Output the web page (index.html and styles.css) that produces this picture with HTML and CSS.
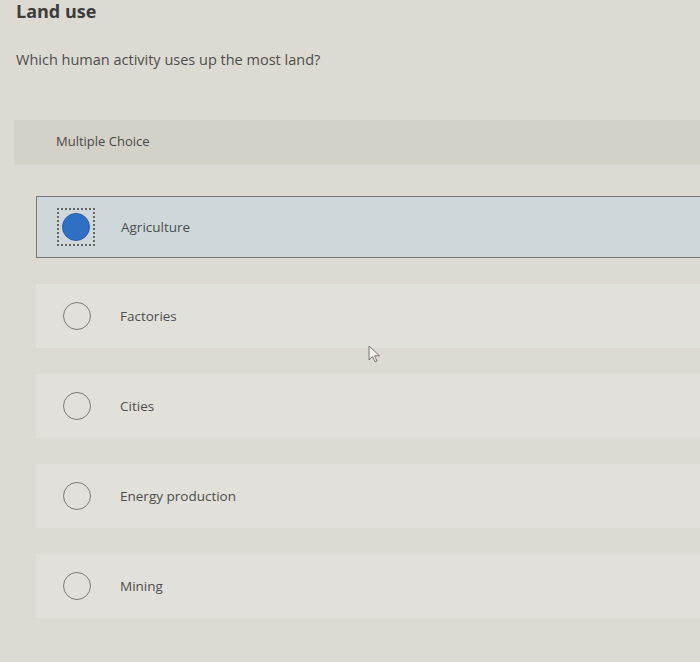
FILE: index.html
```html
<!DOCTYPE html>
<html lang="en">
<head>
<meta charset="UTF-8" />
<meta name="viewport" content="width=device-width, initial-scale=1" />
<title>Land use</title>
<link rel="stylesheet" href="styles.css">
</head>
<body>

<header class="top">
  <h1>Land use</h1>
</header>

<p class="question">Which human activity uses up the most land?</p>

<section class="panel">
  <div class="panel-head">Multiple Choice</div>

  <div class="choices">
    <label class="choice selected">
      <span class="focus"><span class="radio"></span></span>
      <span class="text">Agriculture</span>
    </label>
    <label class="choice">
      <span class="focus"><span class="radio"></span></span>
      <span class="text">Factories</span>
    </label>
    <label class="choice">
      <span class="focus"><span class="radio"></span></span>
      <span class="text">Cities</span>
    </label>
    <label class="choice">
      <span class="focus"><span class="radio"></span></span>
      <span class="text">Energy production</span>
    </label>
    <label class="choice">
      <span class="focus"><span class="radio"></span></span>
      <span class="text">Mining</span>
    </label>
  </div>
</section>

<!-- mouse pointer -->
<svg class="cursor" width="16" height="20" viewBox="0 0 16 20">
  <path d="M1 1 L1 15 L4.5 11.5 L7 17 L9 16 L6.6 10.8 L11.5 10.8 Z" fill="#f2f1ec" stroke="#777" stroke-width="1" stroke-linejoin="round"/>
</svg>

</body>
</html>
```

FILE: styles.css
```css
body { margin: 0; padding: 0; background: #dcdad3; font-family: "Open Sans", Arial, sans-serif; color: #555; position: relative; min-height: 662px; overflow: hidden; }

.top { padding: 0 16px; height: 22px; }
.top h1 { margin: 0; font-size: 18px; line-height: 22px; font-weight: 700; color: #3c3c3c; }

.question { margin: 28px 0 0 16px; font-size: 14.5px; line-height: 20px; color: #4e4e4e; }

.panel { margin: 50px 0 0 14px; }
.panel-head { background: #d4d1c9; height: 45px; line-height: 43px; padding-left: 42px; font-size: 13px; color: #4a4a4a; }

.choices { padding: 31px 0 0 22px; display: flex; flex-direction: column; gap: 26px; }

.choice { display: flex; align-items: center; height: 64px; background: #e2e0da; padding-left: 22px; }
.choice .focus { width: 38px; height: 38px; display: flex; align-items: center; justify-content: center; box-sizing: border-box; }
.choice .radio { width: 28px; height: 28px; border-radius: 50%; border: 1.5px solid #7a7a7a; box-sizing: border-box; }
.choice .text { margin-left: 24px; font-size: 13.5px; color: #4e4e4e; }

.choice.selected { background: #ced7d9; border: 1px solid #787878; border-right: none; height: 60px; padding-left: 20px; }
.choice.selected .focus { border: 2px dotted #666; }
.choice.selected .radio { background: #2f6fc4; border: 1px solid #2a5fa8; width: 28px; height: 28px; }
.choice.selected .text { margin-left: 26px; }

.cursor { position: absolute; left: 368px; top: 345px; }
```
